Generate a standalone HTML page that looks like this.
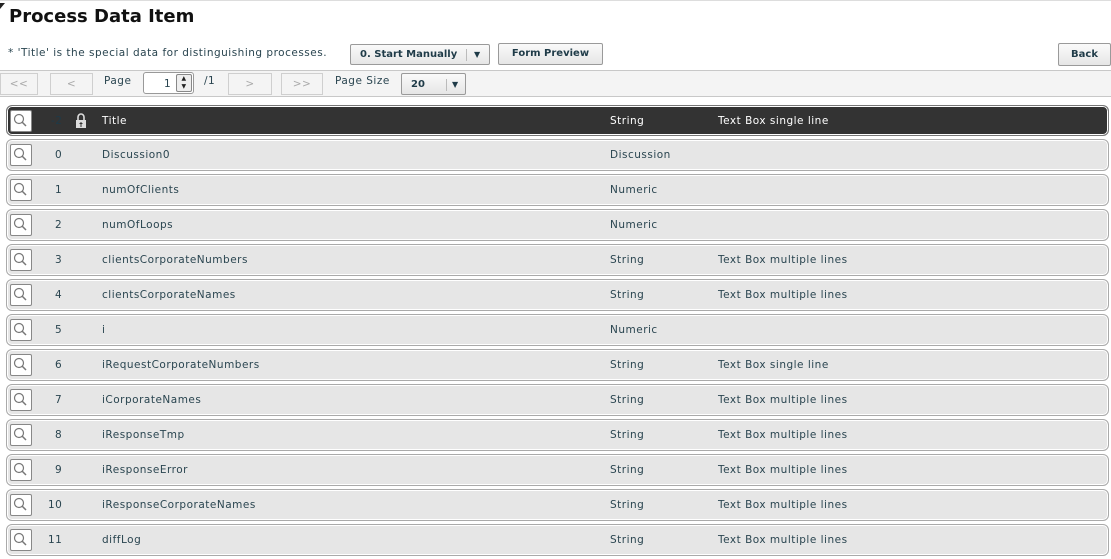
<!DOCTYPE html>
<html><head><meta charset="utf-8"><style>
*{box-sizing:border-box;margin:0;padding:0}
body{width:1111px;height:559px;background:#fff;font-family:"DejaVu Sans","Liberation Sans",sans-serif;font-size:10.5px;letter-spacing:0.5px;color:#2a4550;position:relative;overflow:hidden}
.a{position:absolute;white-space:nowrap}
.btn{position:absolute;border:1px solid #9a9a9a;border-radius:2px;background:linear-gradient(#fafafa,#e6e6e6);font-weight:bold;color:#1f3b48;font-size:10px;letter-spacing:0;text-align:center}
.tb{position:absolute;border:1px solid #cfcfcf;background:#f4f4f4;color:#aaa;text-align:center;line-height:20px;top:73px;height:22px}
.row{position:absolute;left:6px;width:1103px;height:32px;border:1px solid #aaa;border-radius:6px;background:#e6e6e6;box-shadow:inset 0 0 0 1px #fff}
.row span{position:absolute;top:9px}
.mag{position:absolute;left:3px;top:4px;width:22px;height:22px;border:1px solid #888;border-radius:2px;background:#fff}
</style></head><body>
<div class="a" style="left:0;top:0;width:1111px;height:3px;border-top:1px solid #ddd"></div>
<div class="a" style="left:0;top:3px;width:0;height:0;border-top:6px solid #222;border-right:5px solid transparent"></div>
<div class="a" style="left:9px;top:6px;font-size:18px;letter-spacing:0;font-weight:bold;color:#111">Process Data Item</div>
<div class="a" style="left:8px;top:47px">* 'Title' is the special data for distinguishing processes.</div>
<div class="btn" style="left:350px;top:44px;width:140px;height:21px;line-height:20px;text-align:left;padding-left:9px">0. Start Manually<span style="position:absolute;left:115px;top:4px;height:12px;border-left:1px solid #bbb"></span><span style="position:absolute;left:123px;top:0;font-size:8px">▼</span></div>
<div class="btn" style="left:498px;top:43px;width:105px;height:22px;line-height:20px">Form Preview</div>
<div class="btn" style="left:1058px;top:43px;width:53px;height:23px;line-height:21px">Back</div>
<div class="a" style="left:0;top:70px;width:1111px;height:27px;background:#f4f4f4;border-top:1px solid #c8c8c8;border-bottom:1px solid #c8c8c8"></div>
<div class="tb" style="left:0;width:38px">&lt;&lt;</div>
<div class="tb" style="left:50px;width:43px">&lt;</div>
<div class="a" style="left:104px;top:75px">Page</div>
<div class="a" style="left:143px;top:72px;width:51px;height:22px;border:1px solid #999;border-radius:3px;background:#fff"><span style="position:absolute;left:20px;top:5px">1</span><span style="position:absolute;left:32px;top:1px;width:16px;height:18px;border:1px solid #888;border-radius:2px;background:#eee;font-size:6px;line-height:8px;text-align:center;color:#222">▲<br>▼</span></div>
<div class="a" style="left:204px;top:75px">/1</div>
<div class="tb" style="left:228px;width:44px">&gt;</div>
<div class="tb" style="left:281px;width:42px">&gt;&gt;</div>
<div class="a" style="left:335px;top:75px">Page Size</div>
<div class="btn" style="left:401px;top:73px;width:65px;height:22px;line-height:22px;text-align:left;padding-left:9px">20<span style="position:absolute;left:44px;top:5px;height:12px;border-left:1px solid #bbb"></span><span style="position:absolute;left:50px;top:0;font-size:8px">▼</span></div>
<div class="row" style="top:105px;height:31px;background:#333;border-color:#777">
<div class="mag"><svg width="20" height="20"><circle cx="8" cy="8" r="4.5" fill="none" stroke="#777" stroke-width="1.2"/><path d="M11 11l4 4" stroke="#777" stroke-width="1.5"/></svg></div>
<span style="left:44px;color:#1e3a48">-2</span>
<svg class="a" style="left:68px;top:7px" width="12" height="16"><path d="M3 7V4a3 3 0 016 0v3" fill="none" stroke="#ddd" stroke-width="1.6"/><rect x="1" y="7" width="10" height="8" fill="#ddd"/><path d="M6 9v5M4.5 10.5h3" stroke="#333"/></svg>
<span style="left:95px;color:#fff">Title</span><span style="left:603px;color:#fff">String</span><span style="left:711px;color:#fff">Text Box single line</span></div>
<div id="rows"></div>
<script>
var d=[["0","Discussion0","Discussion",""],["1","numOfClients","Numeric",""],["2","numOfLoops","Numeric",""],["3","clientsCorporateNumbers","String","Text Box multiple lines"],["4","clientsCorporateNames","String","Text Box multiple lines"],["5","i","Numeric",""],["6","iRequestCorporateNumbers","String","Text Box single line"],["7","iCorporateNames","String","Text Box multiple lines"],["8","iResponseTmp","String","Text Box multiple lines"],["9","iResponseError","String","Text Box multiple lines"],["10","iResponseCorporateNames","String","Text Box multiple lines"],["11","diffLog","String","Text Box multiple lines"]];
var h="";d.forEach(function(r,i){var t=139+i*35;h+='<div class="row" style="top:'+t+'px"><div class="mag"><svg width="20" height="20"><circle cx="8" cy="8" r="4.5" fill="none" stroke="#777" stroke-width="1.2"/><path d="M11 11l4 4" stroke="#777" stroke-width="1.5"/></svg></div><span style="left:'+(r[0].length>1?41:48)+'px">'+r[0]+'</span><span style="left:95px">'+r[1]+'</span><span style="left:603px">'+r[2]+'</span><span style="left:711px">'+r[3]+'</span></div>';});
document.getElementById("rows").innerHTML=h;
</script>
</body></html>
